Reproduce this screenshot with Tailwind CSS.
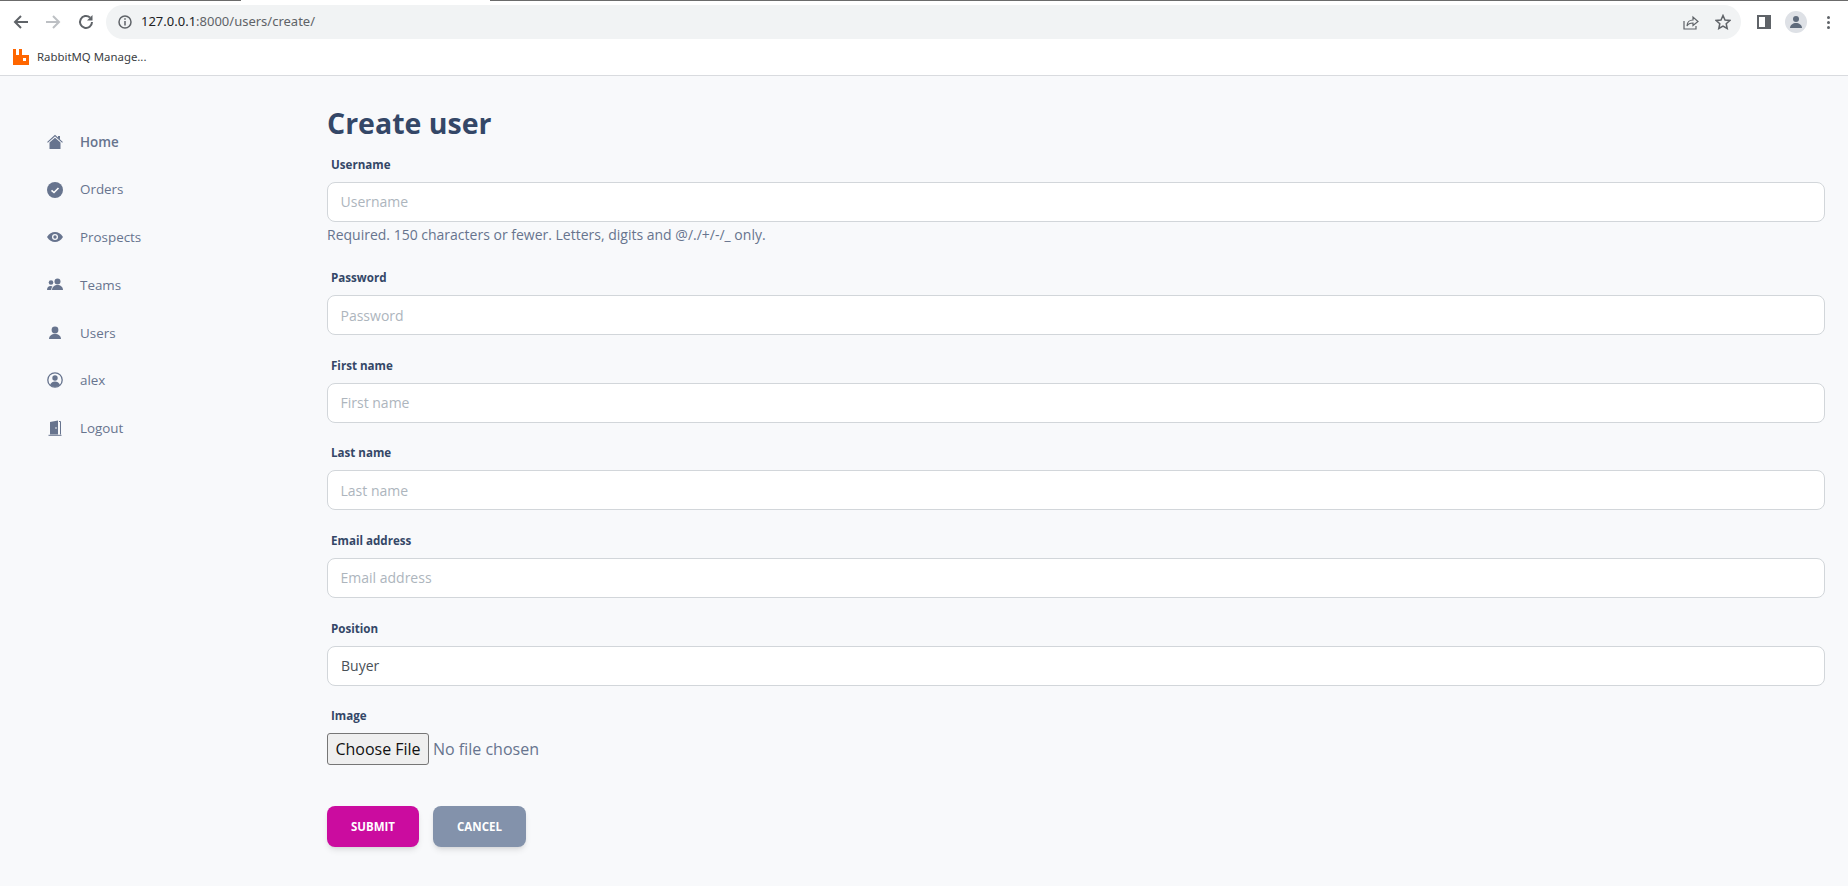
<!DOCTYPE html>
<html lang="en">

<head>
    <meta charset="UTF-8">
    <script src="https://cdn.jsdelivr.net/npm/@tailwindcss/browser@4"></script>
    <title>Create user</title>
</head>

<body class="h-[886px] overflow-hidden bg-[#f8f9fb] font-['Open_Sans',sans-serif]">
    <!-- browser chrome -->
    <header class="h-[76px] bg-white border-b border-[#d9dbdf]">
        <div class="h-[1px] flex">
            <div class="w-[241px] bg-[#6b6b6b]"></div>
            <div class="w-[249px] bg-white"></div>
            <div class="flex-1 bg-[#6b6b6b]"></div>
        </div>
        <div class="h-[38px] pt-[4px] flex items-center">
            <svg class="w-[16px] h-[16px] ml-[13px]" viewBox="0 0 16 16" fill="none" stroke="#5f6368" stroke-width="2"><path d="M15 8H2M8 2 2 8l6 6" /></svg>
            <svg class="w-[16px] h-[16px] ml-[16px]" viewBox="0 0 16 16" fill="none" stroke="#bdc0c4" stroke-width="2"><path d="M1 8h13M8 2l6 6-6 6" /></svg>
            <svg class="w-[16px] h-[16px] ml-[17px]" viewBox="0 0 16 16" fill="none" stroke="#5f6368" stroke-width="2"><path d="M14 8a6 6 0 1 1-2-4.500" /><path d="M14.500 1v5.500H9" fill="#5f6368" stroke="none" /></svg>
            <div class="w-[1635px] h-[34px] ml-[12px] mr-[1px] rounded-full bg-[#f1f3f4] flex items-center">
                <svg class="w-[14px] h-[14px] ml-[12px]" viewBox="0 0 14 14" fill="none" stroke="#5f6368" stroke-width="1.500"><circle cx="7" cy="7" r="6" /><path d="M7 6v4.500M7 3.200v1.500" /></svg>
                <span class="ml-[9px] text-[13px] font-['Noto_Sans',sans-serif] text-[#202124]">127.0.0.1<span class="text-[#5f6368]">:8000/users/create/</span></span>
                <svg class="w-[16px] h-[16px] ml-auto" viewBox="0 0 16 16" fill="none" stroke="#5f6368" stroke-width="1.200"><path d="M1 7v8h12v-3" /><path d="M4 12c0-4 3-6 6-6V3l5 4.500-5 4V9c-3 0-5 1-6 3z" /></svg>
                <svg class="w-[16px] h-[16px] ml-[16px] mr-[10px]" viewBox="0 0 16 16" fill="none" stroke="#5f6368" stroke-width="1.500"><path d="M8 1.500 10 6l4.800.500-3.600 3.200 1 4.800L8 12l-4.200 2.500 1-4.800L1.200 6.500 6 6z" /></svg>
            </div>
            <div class="w-[14px] h-[14px] ml-[15px] border-[2px] border-[#5f6368] border-r-[6px]"></div>
            <div class="w-[22px] h-[22px] ml-[14px] rounded-full bg-[#dee1e6] flex items-center justify-center">
                <svg class="w-[14px] h-[14px]" viewBox="0 0 14 14" fill="#5f6b7c"><circle cx="7" cy="4" r="3" /><path d="M1 13c0-3 3-5 6-5s6 2 6 5z" /></svg>
            </div>
            <div class="ml-[20px] flex flex-col gap-[2px]">
                <div class="w-[3px] h-[3px] rounded-full bg-[#5f6368]"></div>
                <div class="w-[3px] h-[3px] rounded-full bg-[#5f6368]"></div>
                <div class="w-[3px] h-[3px] rounded-full bg-[#5f6368]"></div>
            </div>
        </div>
        <div class="h-[36px] flex items-center pl-[13px]">
            <svg class="w-[16px] h-[16px]" viewBox="0 0 16 16" fill="#ff6600"><path d="M0 0h3v6h3V0h3v6h2v0h5v10H0z" /><rect x="10" y="9" width="3" height="3" fill="#fff" /></svg>
            <span class="ml-[8px] text-[11.400px] font-['Noto_Sans',sans-serif] text-[#3c4043]">RabbitMQ Manage...</span>
        </div>
    </header>

    <div class="flex">
        <!-- sidebar -->
        <nav class="w-[327px] pl-[47px] pt-[42px] text-[13.400px] text-[#67748e]">
            <a href="#" class="h-[47.700px] flex items-center font-semibold">
                <svg class="w-[16px] h-[16px]" viewBox="0 0 16 16" fill="#67748e"><path d="M2.500 8.500 8 3.700l5.500 4.800V15h-11z" /><path d="M.5 8.300 8 1.500l7.500 6.800" fill="none" stroke="#67748e" stroke-width="1.100" /><path d="M11 2h2v3.500l-2-1.800z" /></svg>
                <span class="ml-[17px]">Home</span>
            </a>
            <a href="#" class="h-[47.700px] flex items-center">
                <svg class="w-[16px] h-[16px]" viewBox="0 0 16 16"><circle cx="8" cy="8" r="8" fill="#67748e" /><path d="M4.500 8.300 7 10.500l4.500-4.500" fill="none" stroke="#fff" stroke-width="1.600" /></svg>
                <span class="ml-[17px]">Orders</span>
            </a>
            <a href="#" class="h-[47.700px] flex items-center">
                <svg class="w-[16px] h-[16px]" viewBox="0 0 16 16"><path d="M0 8c2-3.500 5-5 8-5s6 1.500 8 5c-2 3.500-5 5-8 5s-6-1.500-8-5z" fill="#67748e" /><circle cx="8" cy="8" r="3" fill="#f8f9fb" /><circle cx="8" cy="8" r="1.700" fill="#67748e" /></svg>
                <span class="ml-[17px]">Prospects</span>
            </a>
            <a href="#" class="h-[47.700px] flex items-center">
                <svg class="w-[16px] h-[16px]" viewBox="0 0 16 16" fill="#67748e"><circle cx="4" cy="5.500" r="2.300" /><circle cx="10.500" cy="4.500" r="3" /><path d="M0 13c0-2.500 1.500-4 3.500-4 1 0 1.500.3 2 .6-.8.800-1.200 2-1.200 3.400z" /><path d="M5 13c0-3 2.500-5 5.500-5s5.500 2 5.500 5z" /></svg>
                <span class="ml-[17px]">Teams</span>
            </a>
            <a href="#" class="h-[47.700px] flex items-center">
                <svg class="w-[16px] h-[16px]" viewBox="0 0 16 16" fill="#67748e"><circle cx="8" cy="5" r="3.400" /><path d="M2 14c0-3 2.500-5 6-5s6 2 6 5z" /></svg>
                <span class="ml-[17px]">Users</span>
            </a>
            <a href="#" class="h-[47.700px] flex items-center">
                <svg class="w-[16px] h-[16px]" viewBox="0 0 16 16"><circle cx="8" cy="8" r="7.200" fill="none" stroke="#67748e" stroke-width="1.300" /><circle cx="8" cy="6" r="2.700" fill="#67748e" /><path d="M3 13c1-2.500 3-3.500 5-3.500s4 1 5 3.500c-1.500 1.300-3 2-5 2s-3.500-.7-5-2z" fill="#67748e" /></svg>
                <span class="ml-[17px]">alex</span>
            </a>
            <a href="#" class="h-[47.700px] flex items-center">
                <svg class="w-[16px] h-[16px]" viewBox="0 0 16 16" fill="#67748e"><path d="M3 14.500V2l8-1.500v14z" /><path d="M12 1.500h1.500v13" fill="none" stroke="#67748e" /><path d="M1.500 15.300h13" stroke="#67748e" stroke-width="1" /><circle cx="9" cy="8" r=".8" fill="#fff" /></svg>
                <span class="ml-[17px]">Logout</span>
            </a>
        </nav>

        <!-- form -->
        <main class="w-[1498px] pt-[27px]">
            <h1 class="h-[41px] text-[28.500px] leading-[41px] font-bold text-[#344767]">Create user</h1>
            <form>
                <div class="mt-[11.500px] mb-[23.500px]">
                    <label class="block h-[18px] pl-[4px] text-[11.600px] leading-[18px] font-bold text-[#344767]">Username</label>
                    <input type="text" placeholder="Username" class="mt-[8px] block w-full h-[40px] px-[12.500px] bg-white border border-[#d2d6da] rounded-[8px] text-[14px] text-[#495057] placeholder:text-[#adb5bd]">
                    <p class="h-[24px] text-[14px] leading-[26px] text-[#67748e]">Required. 150 characters or fewer. Letters, digits and @/./+/-/_ only.</p>
                </div>
                <div class="mb-[21.670px]">
                    <label class="block h-[18px] pl-[4px] text-[11.600px] leading-[18px] font-bold text-[#344767]">Password</label>
                    <input type="password" placeholder="Password" class="mt-[8px] block w-full h-[40px] px-[12.500px] bg-white border border-[#d2d6da] rounded-[8px] text-[14px] text-[#495057] placeholder:text-[#adb5bd]">
                </div>
                <div class="mb-[21.670px]">
                    <label class="block h-[18px] pl-[4px] text-[11.600px] leading-[18px] font-bold text-[#344767]">First name</label>
                    <input type="text" placeholder="First name" class="mt-[8px] block w-full h-[40px] px-[12.500px] bg-white border border-[#d2d6da] rounded-[8px] text-[14px] text-[#495057] placeholder:text-[#adb5bd]">
                </div>
                <div class="mb-[21.670px]">
                    <label class="block h-[18px] pl-[4px] text-[11.600px] leading-[18px] font-bold text-[#344767]">Last name</label>
                    <input type="text" placeholder="Last name" class="mt-[8px] block w-full h-[40px] px-[12.500px] bg-white border border-[#d2d6da] rounded-[8px] text-[14px] text-[#495057] placeholder:text-[#adb5bd]">
                </div>
                <div class="mb-[21.670px]">
                    <label class="block h-[18px] pl-[4px] text-[11.600px] leading-[18px] font-bold text-[#344767]">Email address</label>
                    <input type="email" placeholder="Email address" class="mt-[8px] block w-full h-[40px] px-[12.500px] bg-white border border-[#d2d6da] rounded-[8px] text-[14px] text-[#495057] placeholder:text-[#adb5bd]">
                </div>
                <div class="mb-[21.670px]">
                    <label class="block h-[18px] pl-[4px] text-[11.600px] leading-[18px] font-bold text-[#344767]">Position</label>
                    <select class="mt-[8px] block w-full h-[40px] px-[13px] bg-white border border-[#d2d6da] rounded-[8px] text-[14px] text-[#495057] appearance-none"><option>Buyer</option></select>
                </div>
                <div>
                    <label class="block h-[18px] pl-[4px] text-[11.600px] leading-[18px] font-bold text-[#344767]">Image</label>
                    <div class="mt-[8px] flex items-center h-[32px]">
                        <button type="button" class="w-[102px] h-[32px] bg-[#efefef] border border-[#767676] rounded-[3px] text-[16px] text-[#111]">Choose File</button>
                        <span class="ml-[4px] text-[16px] text-[#67748e]">No file chosen</span>
                    </div>
                </div>
                <div class="mt-[41px] flex gap-[14px]">
                    <button type="button" class="w-[92px] h-[41px] rounded-[8px] bg-[#cb0c9f] text-white text-[11.500px] font-bold uppercase shadow-md">Submit</button>
                    <button type="button" class="w-[93px] h-[41px] rounded-[8px] bg-[#8392ab] text-white text-[11.500px] font-bold uppercase shadow-md">Cancel</button>
                </div>
            </form>
        </main>
    </div>
</body>

</html>
